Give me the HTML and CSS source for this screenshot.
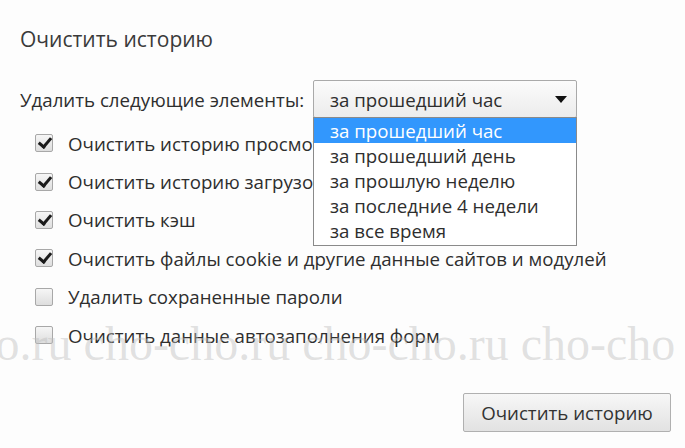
FILE: index.html
```html
<!DOCTYPE html>
<html lang="ru">
<head>
    <meta charset="UTF-8">
    <title>Очистить историю</title>
    <link rel="stylesheet" href="styles.css">
</head>
<body>
    <div class="dialog">
        <h1 class="title">Очистить историю</h1>

        <!-- Период удаления -->
        <div class="period">
            <span class="period-label">Удалить следующие элементы:</span>
            <div class="select">
                <div class="select-box">
                    <span>за прошедший час</span>
                    <svg class="arrow" width="12" height="7" viewBox="0 0 12 7"><path d="M0 0H12L6 7Z" fill="#111"/></svg>
                </div>
                <ul class="options">
                    <li class="active">за прошедший час</li>
                    <li>за прошедший день</li>
                    <li>за прошлую неделю</li>
                    <li>за последние 4 недели</li>
                    <li>за все время</li>
                </ul>
            </div>
        </div>

        <!-- Что удалять -->
        <ul class="checks">
            <li><span class="box checked"></span>Очистить историю просмотров</li>
            <li><span class="box checked"></span>Очистить историю загрузок</li>
            <li><span class="box checked"></span>Очистить кэш</li>
            <li><span class="box checked"></span>Очистить файлы cookie и другие данные сайтов и модулей</li>
            <li><span class="box"></span>Удалить сохраненные пароли</li>
            <li><span class="box"></span>Очистить данные автозаполнения форм</li>
        </ul>

        <div class="actions">
            <button class="btn">Очистить историю</button>
        </div>
    </div>

    <div class="watermark">cho-cho.ru cho-cho.ru cho-cho.ru cho-cho</div>
</body>
</html>
```

FILE: styles.css
```css
body {
    margin: 0;
    padding: 0;
    background: #fdfdfd;
    font-family: "Open Sans", "Noto Sans", sans-serif;
    font-size: 18.7px;
    color: #2e2e2e;
    overflow: hidden;
}
.dialog {
    padding: 24px 14px 0 20px;
}
.title {
    margin: 0;
    font-size: 21px;
    font-weight: normal;
    line-height: 30px;
    color: #3a3a3a;
}
.period {
    display: flex;
    align-items: center;
    margin-top: 26px;
}
.period-label {
    width: 293px;
    white-space: nowrap;
}
.select {
    position: relative;
    width: 264px;
}
.select-box {
    height: 36px;
    display: flex;
    align-items: center;
    justify-content: space-between;
    padding: 0 8px 0 16px;
    border: 1px solid #a9a9a9;
    border-radius: 2px;
    background: linear-gradient(#fbfbfb, #ececec);
}
.arrow {
    margin-right: 1px;
}
.options {
    position: absolute;
    top: 37px;
    left: 0;
    right: 0;
    margin: 0;
    padding: 0 0 2px 0;
    list-style: none;
    background: #fff;
    border: 1px solid #8a8a8a;
    z-index: 2;
}
.options li {
    height: 25px;
    line-height: 25px;
    padding-left: 16px;
    white-space: nowrap;
}
.options li.active {
    background: #3297fd;
    color: #fff;
}
.checks {
    list-style: none;
    margin: 6px 0 0 0;
    padding: 0;
}
.checks li {
    display: flex;
    align-items: center;
    height: 38.4px;
    padding-left: 15px;
    white-space: nowrap;
}
.box {
    position: relative;
    flex: none;
    width: 16px;
    height: 16px;
    margin-right: 15px;
    border: 1px solid #a8a8a8;
    border-radius: 2px;
    background: linear-gradient(#f6f6f6, #dedede);
}
.box.checked::after {
    content: '';
    position: absolute;
    left: 5px;
    top: 0px;
    width: 5px;
    height: 10px;
    border: solid #1a1a1a;
    border-width: 0 3px 3px 0;
    transform: rotate(40deg);
}
.actions {
    display: flex;
    justify-content: flex-end;
    margin-top: 39px;
}
.btn {
    width: 208px;
    height: 39px;
    border: 1px solid #b0b0b0;
    border-radius: 2px;
    background: linear-gradient(#f7f7f7, #e2e2e2);
    font-family: inherit;
    font-size: 18.7px;
    color: #333;
}
.watermark {
    position: absolute;
    left: -135px;
    top: 314px;
    font-family: "Liberation Serif", serif;
    font-size: 48px;
    line-height: 60px;
    color: rgba(190, 190, 190, 0.45);
    white-space: nowrap;
    pointer-events: none;
}
```
